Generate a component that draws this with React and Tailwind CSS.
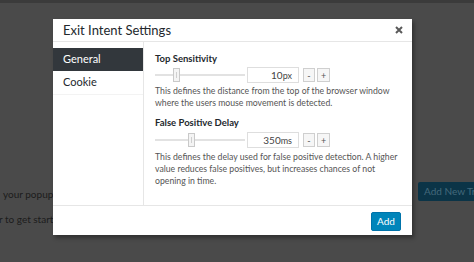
import React from 'react';

function Slider({ pos }) {
  return (
    <div className="relative w-[90px] h-[14px] flex items-center">
      <div className="w-full h-[2px] bg-[#e2e2e2]" />
      <div
        className="absolute top-0 w-[7px] h-[14px] bg-[#f4f4f4] border border-[#c9c9c9] flex items-center justify-center"
        style={{ left: pos }}
      >
        <div className="w-px h-[6px] bg-[#cfcfcf]" />
      </div>
    </div>
  );
}

function NumberField({ value, unit, pos }) {
  return (
    <div className="flex items-center h-[16px]">
      <Slider pos={pos} />
      <div className="ml-[2px] w-[52px] h-[16px] border border-[#dedede] bg-white flex items-end justify-end pr-[6px] pb-[2px] text-[#444] leading-none">
        <span className="text-[10px]">{value}</span>
        <span className="text-[9px]">{unit}</span>
      </div>
      <div className="ml-[4px] flex gap-[2px]">
        <div className="w-[12px] h-[14px] bg-[#f6f6f6] border border-[#cfcfcf] flex items-center justify-center text-[9px] text-[#555] leading-none">-</div>
        <div className="w-[13px] h-[14px] bg-[#f6f6f6] border border-[#cfcfcf] flex items-center justify-center text-[9px] text-[#555] leading-none">+</div>
      </div>
    </div>
  );
}

export default function App() {
  return (
    <div className="relative w-[474px] h-[262px] overflow-hidden bg-[#4a4a4a] font-['Lato',sans-serif]">
      <div className="h-[3px] bg-[#3b3b3b]" />

      {/* page behind the overlay */}
      <div className="flex items-start justify-between mt-[179px]">
        <div className="text-[10px] text-[#1c1c1c] leading-[25px] whitespace-nowrap">
          <div className="pl-[3px]">your popup</div>
          <div className="-ml-[1px]">r to get started</div>
        </div>
        <div className="mr-[-14px] w-[70px] h-[19px] px-[6px] bg-[#0b3447] text-[10px] text-[#44697b] flex items-center whitespace-nowrap overflow-hidden rounded-[2px]">
          Add New Trigger
        </div>
      </div>

      {/* modal */}
      <div className="absolute left-[53px] top-[19px] w-[359px] h-[216px] bg-white flex flex-col shadow-[2px_3px_4px_rgba(0,0,0,0.35)]">
        <div className="h-[23px] border-b border-[#e6e6e6] flex items-center justify-between pl-[10px] pr-[9px]">
          <div className="text-[13px] text-[#23282d] leading-none">Exit Intent Settings</div>
          <svg width="8" height="8" viewBox="0 0 8 8">
            <path d="M1 1 L7 7 M7 1 L1 7" stroke="#5a5a5a" strokeWidth="2" />
          </svg>
        </div>

        <div className="flex-1 flex min-h-0">
          <div className="w-[91px] border-r border-[#e6e6e6] pt-[6px]">
            <div className="h-[23px] bg-[#32373c] text-white text-[11px] flex items-center pl-[10px]">General</div>
            <div className="h-[24px] text-[#23282d] text-[11px] flex items-center pl-[10px] border-b border-[#f3f3f3]">Cookie</div>
          </div>

          <div className="flex-1 pl-[11px] pt-[10px] text-[8.7px] text-[#555] whitespace-nowrap">
            <div className="text-[9.5px] font-bold text-[#23282d] leading-[14px]">Top Sensitivity</div>
            <div className="mt-[1px]">
              <NumberField value="10" unit="px" pos={18} />
            </div>
            <div className="mt-[2px] leading-[12px]">
              This defines the distance from the top of the browser window
              <br />
              where the users mouse movement is detected.
            </div>

            <div className="mt-[7px] text-[9.5px] font-bold text-[#23282d] leading-[14px]">False Positive Delay</div>
            <div className="mt-[2px]">
              <NumberField value="350" unit="ms" pos={33} />
            </div>
            <div className="mt-[3px] leading-[12px]">
              This defines the delay used for false positive detection. A higher
              <br />
              value reduces false positives, but increases chances of not
              <br />
              opening in time.
            </div>
          </div>
        </div>

        <div className="h-[30px] border-t border-[#e6e6e6] flex items-center justify-end pr-[11px] pt-[2px]">
          <div className="w-[30px] h-[19px] bg-[#0085ba] border border-[#0073aa] rounded-[2px] text-white text-[10px] flex items-center justify-center">
            Add
          </div>
        </div>
      </div>
    </div>
  );
}
